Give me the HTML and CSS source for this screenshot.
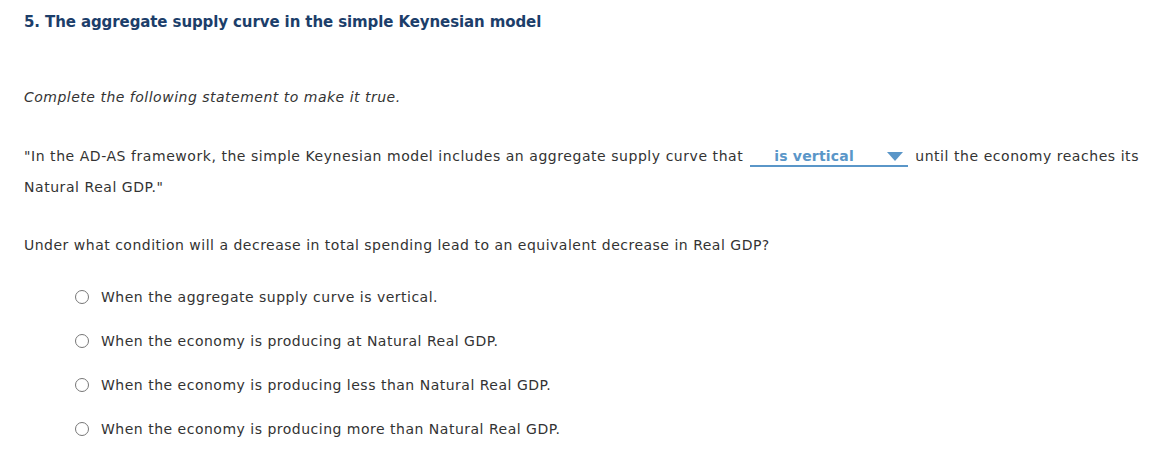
FILE: index.html
```html
<!DOCTYPE html>
<html>
<head>
<meta charset="utf-8">
<link rel="stylesheet" href="styles.css">
</head>
<body>
<div class="page">
  <h1 class="title">5. The aggregate supply curve in the simple Keynesian model</h1>
  <p class="instr">Complete the following statement to make it true.</p>
  <p class="statement">"In the AD-AS framework, the simple Keynesian model includes an aggregate supply curve that <span class="dropdown"><span class="dd-text">is vertical</span><svg class="dd-arrow" width="16" height="9" viewBox="0 0 16 9"><polygon points="0,0 16,0 8,9" fill="#5a96c8"/></svg></span> until the economy reaches its Natural Real GDP."</p>
  <p class="question">Under what condition will a decrease in total spending lead to an equivalent decrease in Real GDP?</p>
  <ul class="options">
    <li class="option"><span class="radio"></span>When the aggregate supply curve is vertical.</li>
    <li class="option"><span class="radio"></span>When the economy is producing at Natural Real GDP.</li>
    <li class="option"><span class="radio"></span>When the economy is producing less than Natural Real GDP.</li>
    <li class="option"><span class="radio"></span>When the economy is producing more than Natural Real GDP.</li>
  </ul>
</div>
</body>
</html>
```
FILE: styles.css
```css
html, body {
  margin: 0;
  padding: 0;
  background: #fff;
}
body {
  font-family: "DejaVu Sans", Verdana, sans-serif;
  font-size: 14px;
  letter-spacing: 0.5px;
  color: #333;
}
.page {
  padding: 13px 24px 0 24px;
}
.title {
  margin: 0;
  font-size: 15px;
  letter-spacing: -0.1px;
  font-weight: bold;
  color: #1c3e6a;
  line-height: 18px;
}
.instr {
  margin: 57px 0 0 0;
  font-style: italic;
  line-height: 18px;
}
.statement {
  margin: 35px 0 0 0;
  line-height: 31px;
  letter-spacing: 0.55px;
}
.dropdown {
  display: inline-flex;
  align-items: center;
  justify-content: space-between;
  width: 158px;
  box-sizing: border-box;
  padding: 0 5px 0 24px;
  border-bottom: 2px solid #5a96c8;
  line-height: 17px;
  margin: 0 2px;
}
.dd-text {
  color: #5a96c8;
  font-weight: bold;
  letter-spacing: 0.2px;
}
.dd-arrow {
  display: block;
}
.question {
  margin: 33px 0 0 0;
  line-height: 18px;
}
.options {
  list-style: none;
  margin: 21px 0 0 0;
  padding: 0 0 0 51px;
}
.option {
  display: flex;
  align-items: center;
  height: 44px;
  line-height: 18px;
}
.radio {
  width: 14px;
  height: 14px;
  border: 1px solid #777;
  border-radius: 50%;
  box-sizing: border-box;
  margin-right: 12px;
}
```
